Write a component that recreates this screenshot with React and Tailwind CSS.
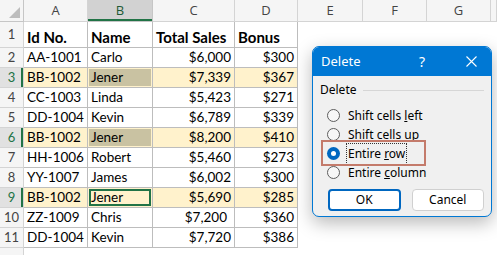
import React from 'react';

const rows = [
  { id: 'AA-1001', name: 'Carlo', sales: '$6,000', bonus: '$300' },
  { id: 'BB-1002', name: 'Jener', sales: '$7,339', bonus: '$367', hl: true, sel: true },
  { id: 'CC-1003', name: 'Linda', sales: '$5,423', bonus: '$271' },
  { id: 'DD-1004', name: 'Kevin', sales: '$6,789', bonus: '$339' },
  { id: 'BB-1002', name: 'Jener', sales: '$8,200', bonus: '$410', hl: true, sel: true },
  { id: 'HH-1006', name: 'Robert', sales: '$5,460', bonus: '$273' },
  { id: 'YY-1007', name: 'James', sales: '$6,002', bonus: '$300' },
  { id: 'BB-1002', name: 'Jener', sales: '$5,690', bonus: '$285', hl: true, active: true },
  { id: 'ZZ-1009', name: 'Chris', sales: '$7,200', bonus: '$360', shift: true },
  { id: 'DD-1004', name: 'Kevin', sales: '$7,720', bonus: '$386' },
];

const cols = ['A', 'B', 'C', 'D', 'E', 'F', 'G', ''];

const cell = 'border-r border-b border-[#bdbdbd] flex items-center px-[3px] overflow-hidden whitespace-nowrap';

function RowHead({ n, hl }) {
  return (
    <div
      className={`flex items-center justify-center border-b border-r border-[#d4d4d4] text-[13px] ${
        hl ? 'bg-[#e1e1e1] text-[#217346] shadow-[inset_-2px_0_0_#217346]' : 'bg-[#f5f5f5] text-[#444]'
      }`}
    >
      {n}
    </div>
  );
}

function Blank() {
  return <div className="bg-white" />;
}

function Radio({ checked, children }) {
  return (
    <div className="flex h-[19px] items-center">
      {checked ? (
        <span className="flex h-[13px] w-[13px] items-center justify-center rounded-full bg-[#0067c0]">
          <span className="h-[5px] w-[5px] rounded-full bg-white" />
        </span>
      ) : (
        <span className="h-[13px] w-[13px] rounded-full border border-[#5d5d5d] bg-[#f7f7f7]" />
      )}
      <span className={`ml-[8px] ${checked ? 'outline outline-1 outline-dotted outline-[#333] outline-offset-[1px]' : ''}`}>
        {children}
      </span>
    </div>
  );
}

export default function App() {
  return (
    <div className="relative h-[255px] w-[497px] overflow-hidden bg-white font-['Lato',sans-serif] text-[13.5px] text-black">
      <div className="grid grid-cols-[24px_64px_65px_82px_63px_65px_64px_64px_1fr] grid-rows-[22px_26px_repeat(11,20px)]">
        {/* corner */}
        <div className="relative border-b border-r border-[#c6c6c6] bg-[#f5f5f5]">
          <svg className="absolute bottom-[3px] right-[3px]" width="11" height="11" viewBox="0 0 11 11">
            <polygon points="11,0 11,11 0,11" fill="#bdbdbd" />
          </svg>
        </div>
        {cols.map((c, i) => (
          <div
            key={i}
            className={`flex items-center justify-center border-b border-r text-[13px] font-['Open_Sans',sans-serif] ${
              c === 'B'
                ? 'border-[#c6c6c6] bg-[#d2d2d2] text-[#1e5a35] shadow-[inset_0_-2px_0_#217346]'
                : 'border-[#d4d4d4] bg-[#f5f5f5] text-[#444]'
            }`}
          >
            {c}
          </div>
        ))}

        {/* row 1 */}
        <RowHead n={1} />
        <div className={`${cell} pt-[5px] font-bold text-[15px]`}>Id No.</div>
        <div className={`${cell} pt-[5px] font-bold text-[15px]`}>Name</div>
        <div className={`${cell} pt-[5px] font-bold text-[15px]`}>Total Sales</div>
        <div className={`${cell} pt-[5px] font-bold text-[15px]`}>Bonus</div>
        <Blank />
        <Blank />
        <Blank />
        <Blank />

        {rows.map((r, i) => {
          const bg = r.hl ? 'bg-[#fff2cc]' : 'bg-white';
          return (
            <React.Fragment key={i}>
              <RowHead n={i + 2} hl={r.hl} />
              <div className={`${cell} ${bg}`}>{r.id}</div>
              <div className={`${cell} ${bg} relative`}>
                {r.sel && <div className="absolute inset-[1px] bg-[#c9c2a2]" />}
                {r.active && <div className="absolute inset-[1px] border-2 border-[#217346]" />}
                <span className="relative">{r.name}</span>
              </div>
              <div className={`${cell} ${bg} justify-end ${r.shift ? 'pr-[7px]' : ''}`}>{r.sales}</div>
              <div className={`${cell} ${bg} justify-end`}>{r.bonus}</div>
              <Blank />
              <Blank />
              <Blank />
              <Blank />
            </React.Fragment>
          );
        })}

        {/* row 12, cut off at the bottom edge */}
        <RowHead n="" />
      </div>

      {/* Delete dialog */}
      <div className="absolute left-[312px] top-[46px] h-[171px] w-[180px] overflow-hidden rounded-[7px] border border-[#0078d4] bg-[#f0f0f0] font-['Noto_Sans',sans-serif] text-[12px] text-black shadow-[0_6px_18px_rgba(0,0,0,0.28)]">
        <div className="flex h-[29px] items-center bg-[#0078d4] pl-[8px] text-[13px] text-white">
          <span className="flex-1">Delete</span>
          <span className="w-[20px] text-center text-[14px]">?</span>
          <span className="ml-[33px] mr-[14px] flex w-[12px] justify-center">
            <svg width="11" height="11" viewBox="0 0 11 11" stroke="white" strokeWidth="1.1">
              <path d="M0.5 0.5 L10.5 10.5 M10.5 0.5 L0.5 10.5" />
            </svg>
          </span>
        </div>
        <div className="relative px-[7px] pt-[6px]">
          <div className="flex h-[16px] items-center">
            <span className="mr-[6px]">Delete</span>
            <span className="h-px flex-1 bg-[#d6d6d6]" />
          </div>
          <div className="mt-[8px] pl-[7px]">
            <Radio>
              Shift cells <span className="underline">l</span>eft
            </Radio>
            <Radio>
              Shift cells <span className="underline">u</span>p
            </Radio>
            <Radio checked>
              Entire <span className="underline">r</span>ow
            </Radio>
            <Radio>
              Entire <span className="underline">c</span>olumn
            </Radio>
          </div>
          <div className="absolute left-[8px] top-[64px] h-[26px] w-[105px] border-2 border-[#c47b6b]" />
          <div className="mt-[7px] flex gap-[11px] pl-[8px]">
            <button className="h-[22px] w-[73px] rounded-[4px] border-2 border-[#0067c0] bg-white text-[12px]">OK</button>
            <button className="h-[22px] w-[73px] rounded-[4px] border border-[#d0d0d0] bg-white text-[12px]">Cancel</button>
          </div>
        </div>
      </div>
    </div>
  );
}
